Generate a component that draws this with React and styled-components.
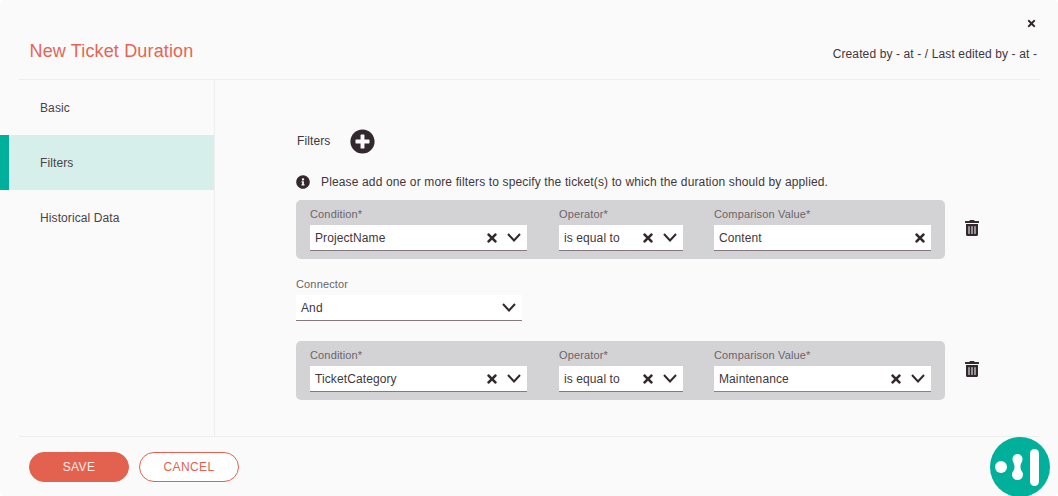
import React from "react";
import styled, { createGlobalStyle } from "styled-components";
import { FaInfoCircle, FaPlusCircle, FaTimes, FaTrashAlt } from "react-icons/fa";

const GlobalStyle = createGlobalStyle`
  html, body {
    margin: 0;
    padding: 0;
    background: #ffffff;
  }
  * {
    box-sizing: border-box;
  }
`;

const Modal = styled.div`
  position: relative;
  width: 1058px;
  height: 496px;
  overflow: hidden;
  background: #fafafa;
  border-radius: 4px;
  color: #3f373c;
  font-family: "Liberation Sans", Arial, sans-serif;
  font-size: 12px;
  letter-spacing: 0.1px;
`;

const Header = styled.header`
  height: 80px;
  margin: 0 18px 0 19px;
  padding: 41px 3px 0 10.5px;
  border-bottom: 1px solid #eeeeee;
  display: flex;
  justify-content: space-between;
`;

const Title = styled.h1`
  margin: 0;
  font-size: 18px;
  line-height: 20px;
  font-weight: 400;
  letter-spacing: 0.15px;
  color: #e66454;
`;

const Meta = styled.div`
  line-height: 14px;
  padding-top: 6px;
  letter-spacing: 0.12px;
`;

const CloseButton = styled.span`
  position: absolute;
  top: 18px;
  right: 21px;
  display: flex;
  font-size: 11px;
  color: #32282e;
`;

const Body = styled.div`
  display: flex;
  height: 356px;
`;

const Sidebar = styled.nav`
  width: 215px;
  border-right: 1px solid #eeeeee;
`;

const NavItem = styled.div`
  height: 55px;
  display: flex;
  align-items: center;
  padding-left: ${(p) => (p.$active ? "31px" : "40px")};
  background: ${(p) => (p.$active ? "#d6efeb" : "transparent")};
  border-left: ${(p) => (p.$active ? "9px solid #00b09b" : "none")};
  color: #4a4247;
`;

const Content = styled.main`
  padding: 48px 0 0 81px;
`;

const FiltersRow = styled.div`
  display: flex;
  align-items: center;
  gap: 20px;
  height: 26px;
  padding-left: 1px;
  font-size: 12px;
`;

const AddIcon = styled(FaPlusCircle)`
  width: 25px;
  height: 25px;
  color: #32282e;
`;

const InfoRow = styled.div`
  display: flex;
  align-items: center;
  gap: 11px;
  height: 14px;
  margin-top: 20px;
  padding-top: 1px;
  letter-spacing: 0.14px;
`;

const InfoIcon = styled(FaInfoCircle)`
  width: 14px;
  height: 14px;
  color: #32282e;
`;

const ConditionRow = styled.div`
  display: flex;
  align-items: flex-start;
  gap: 19px;
  margin-top: ${(p) => p.$top}px;
`;

const Panel = styled.section`
  width: 649px;
  height: 59px;
  padding: 7px 14px 0;
  display: grid;
  grid-template-columns: 249px 155px 217px;
  background: #d3d3d5;
  border-radius: 5px;
`;

const Field = styled.div`
  width: ${(p) => p.$width}px;
`;

const Label = styled.label`
  display: block;
  height: 18px;
  font-size: 11px;
  line-height: 14px;
  color: #6b6469;
  letter-spacing: 0.15px;
`;

const Control = styled.div`
  height: 26px;
  display: flex;
  align-items: center;
  gap: 8px;
  padding: 0 ${(p) => (p.$clearOnly ? "4px" : "6px")} 0 5px;
  background: #ffffff;
  border-bottom: 1px solid ${(p) => (p.$focused ? "#4f9d90" : "#85797f")};
  color: #3f373c;
`;

const Value = styled.span`
  flex: 1;
`;

const ClearIcon = styled(FaTimes)`
  width: 14px;
  height: 14px;
  color: #32282e;
`;

const Chevron = styled.svg`
  width: 14px;
  height: 9px;
  fill: none;
  stroke: #32282e;
  stroke-width: 2;
`;

const TrashButton = styled.span`
  display: flex;
  margin-top: 20px;
  color: #32282e;
  font-size: 16px;
`;

const ConnectorField = styled.div`
  width: 226px;
  margin-top: 18px;
`;

const Footer = styled.footer`
  height: 60px;
  margin: 0 18px 0 19px;
  padding: 15px 0 0 10px;
  border-top: 1px solid #eeeeee;
  display: flex;
  gap: 10px;
  align-items: flex-start;
`;

const Button = styled.button`
  width: 100px;
  height: 30px;
  border-radius: 15px;
  border: 1px solid #e2624f;
  background: ${(p) => (p.$primary ? "#e2624f" : "#ffffff")};
  color: ${(p) => (p.$primary ? "#fbe9e6" : "#e2624f")};
  font-family: inherit;
  font-size: 12px;
  letter-spacing: 0.4px;
`;

const Logo = styled.svg`
  position: absolute;
  left: 990px;
  top: 437px;
  width: 60px;
  height: 60px;
`;

function ChevronDown() {
  return (
    <Chevron viewBox="0 0 14 9">
      <polyline points="1,1 7,7.5 13,1" />
    </Chevron>
  );
}

function SelectField({ label, value, width, clearable = true, arrow = true, focused }) {
  return (
    <Field $width={width}>
      <Label>{label}</Label>
      <Control $focused={focused} $clearOnly={clearable && !arrow}>
        <Value>{value}</Value>
        {clearable && <ClearIcon />}
        {arrow && <ChevronDown />}
      </Control>
    </Field>
  );
}

function Condition({ top, condition, comparison, comparisonArrow, focused }) {
  return (
    <ConditionRow $top={top}>
      <Panel>
        <SelectField label="Condition*" value={condition} width={217} />
        <SelectField label="Operator*" value="is equal to" width={124} />
        <SelectField
          label="Comparison Value*"
          value={comparison}
          width={217}
          arrow={comparisonArrow}
          focused={focused}
        />
      </Panel>
      <TrashButton>
        <FaTrashAlt />
      </TrashButton>
    </ConditionRow>
  );
}

export default function App() {
  return (
    <Modal>
      <GlobalStyle />
      <CloseButton>
        <FaTimes />
      </CloseButton>
      <Header>
        <Title>New Ticket Duration</Title>
        <Meta>Created by - at - / Last edited by - at -</Meta>
      </Header>
      <Body>
        <Sidebar>
          <NavItem>Basic</NavItem>
          <NavItem $active>Filters</NavItem>
          <NavItem>Historical Data</NavItem>
        </Sidebar>
        <Content>
          <FiltersRow>
            Filters
            <AddIcon />
          </FiltersRow>
          <InfoRow>
            <InfoIcon />
            Please add one or more filters to specify the ticket(s) to which the duration should by applied.
          </InfoRow>
          <Condition top={12} condition="ProjectName" comparison="Content" comparisonArrow={false} />
          <ConnectorField>
            <Label>Connector</Label>
            <Control>
              <Value>And</Value>
              <ChevronDown />
            </Control>
          </ConnectorField>
          <Condition top={20} condition="TicketCategory" comparison="Maintenance" comparisonArrow focused />
        </Content>
      </Body>
      <Footer>
        <Button $primary>SAVE</Button>
        <Button>CANCEL</Button>
      </Footer>
      <Logo viewBox="0 0 60 60">
        <circle cx="30" cy="30" r="30" fill="#00b09b" />
        <circle cx="11" cy="30" r="6" fill="#ffffff" />
        <path
          d="M22.500 22a5 5 0 0 1 10 0c0 3-2 4-2 8s2.500 4.500 2.500 7.500a5.500 5.500 0 0 1-11 0c0-3 2.500-3.500 2.500-7.500s-2-5-2-8z"
          fill="#ffffff"
        />
        <rect x="40" y="12" width="9" height="37" rx="4.500" fill="#ffffff" />
      </Logo>
    </Modal>
  );
}
